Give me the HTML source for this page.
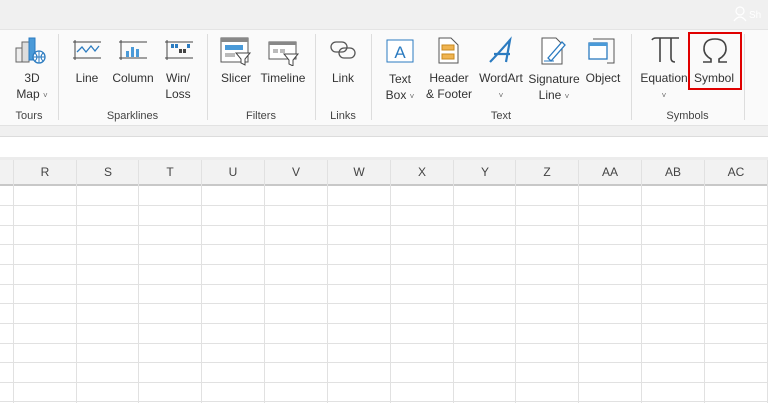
<!DOCTYPE html>
<html><head><meta charset="utf-8"><style>
body{margin:0;width:768px;height:403px;overflow:hidden;background:#fff;font-family:"Liberation Sans",sans-serif;position:relative}
.a{position:absolute}
.t{position:absolute;font-size:12px;color:#333;text-align:center;line-height:16px;white-space:nowrap}
.t i{font-style:normal;font-size:8px;color:#666}
.g{position:absolute;font-size:11px;color:#444;top:110px;text-align:center}
.sep{position:absolute;top:34px;width:1px;height:86px;background:#ddd}
.vl{position:absolute;top:160px;width:1px;height:243px;background:#e1e1e1}
.hl{position:absolute;left:0;width:768px;height:1px;background:#e1e1e1}
.ch{position:absolute;top:165px;font-size:12px;color:#444;text-align:center;width:62px}
</style></head><body>
<div class="a" style="left:0;top:0;width:768px;height:29px;background:#f0f0f0;border-bottom:1px solid #e4e4e4"></div>
<svg class="a" style="left:733px;top:6px" width="35" height="16"><circle cx="7" cy="5" r="4" fill="none" stroke="#fff" stroke-width="1.2"/><path d="M1 15 Q7 7 13 15" fill="none" stroke="#fff" stroke-width="1.2"/><text x="16" y="12" font-size="10" fill="#fff" font-family="Liberation Sans">Sh</text></svg>
<div class="a" style="left:0;top:30px;width:768px;height:95px;background:#fafafa"></div>
<div class="a" style="left:0;top:125px;width:768px;height:10px;background:#f0f0f0;border-top:1px solid #e2e2e2;border-bottom:1px solid #dcdcdc"></div>
<div class="a" style="left:0;top:157px;width:768px;height:3px;background:#ececec"></div>
<div class="a" style="left:0;top:160px;width:768px;height:24px;background:#f2f2f2;border-bottom:2px solid #c8c8c8"></div>

<div class="sep" style="left:58px"></div><div class="sep" style="left:207px"></div><div class="sep" style="left:315px"></div><div class="sep" style="left:371px"></div><div class="sep" style="left:631px"></div><div class="sep" style="left:744px"></div>

<svg class="a" style="left:14px;top:36px" width="34" height="30"><rect x="2" y="12" width="6" height="14" fill="#eee" stroke="#666"/><rect x="8" y="6" width="7" height="20" fill="#ddd" stroke="#666"/><rect x="15" y="2" width="6" height="22" fill="#4a9ad8" stroke="#2b7bc0"/><circle cx="25" cy="21" r="6" fill="#fff" stroke="#2b7bc0" stroke-width="1.3"/><path d="M19 21h12M25 15v12M21 17q4 4 0 8M29 17q-4 4 0 8" stroke="#2b7bc0" fill="none"/></svg>
<svg class="a" style="left:72px;top:38px" width="30" height="24"><path d="M3 2v20M1 4h28M1 20h28" stroke="#444" fill="none"/><path d="M5 14l5-5 4 5 5-6 4 5 4-5" stroke="#2b7bc0" fill="none" stroke-width="1.3"/></svg>
<svg class="a" style="left:118px;top:38px" width="30" height="24"><path d="M3 2v20M1 4h28M1 20h28" stroke="#444" fill="none"/><rect x="8" y="13" width="3" height="6" fill="#4a9ad8"/><rect x="13" y="9" width="3" height="10" fill="#4a9ad8"/><rect x="18" y="11" width="3" height="8" fill="#4a9ad8"/></svg>
<svg class="a" style="left:164px;top:38px" width="30" height="24"><path d="M3 2v20M1 4h28M1 20h28" stroke="#444" fill="none"/><rect x="7" y="6" width="3" height="4" fill="#2b7bc0"/><rect x="11" y="6" width="3" height="4" fill="#2b7bc0"/><rect x="15" y="11" width="3" height="4" fill="#444"/><rect x="19" y="11" width="3" height="4" fill="#444"/><rect x="23" y="6" width="3" height="4" fill="#2b7bc0"/></svg>
<svg class="a" style="left:220px;top:36px" width="32" height="30"><rect x="1" y="2" width="27" height="24" fill="#fff" stroke="#555"/><rect x="1" y="2" width="27" height="4" fill="#888"/><rect x="5" y="9" width="18" height="5" fill="#4a9ad8"/><rect x="5" y="17" width="10" height="4" fill="#bbb"/><path d="M16 17h14l-5 6v6l-4-2v-4z" fill="#fff" stroke="#444"/></svg>
<svg class="a" style="left:268px;top:40px" width="32" height="26"><rect x="1" y="2" width="27" height="17" fill="#fff" stroke="#555"/><rect x="1" y="2" width="27" height="3" fill="#888"/><rect x="5" y="9" width="5" height="4" fill="#bbb"/><rect x="12" y="9" width="5" height="4" fill="#bbb"/><path d="M16 14h14l-5 6v6l-4-2v-4z" fill="#fff" stroke="#444"/></svg>
<svg class="a" style="left:329px;top:40px" width="30" height="22"><rect x="2" y="2" width="16" height="10" rx="5" fill="none" stroke="#555" stroke-width="1.3"/><rect x="10" y="8" width="16" height="10" rx="5" fill="none" stroke="#555" stroke-width="1.3"/></svg>
<svg class="a" style="left:385px;top:38px" width="30" height="26"><rect x="2" y="2" width="26" height="22" fill="#fff" stroke="#2b7bc0"/><text x="15" y="20" font-size="17" fill="#2b7bc0" text-anchor="middle" font-family="Liberation Sans">A</text></svg>
<svg class="a" style="left:436px;top:37px" width="26" height="28"><path d="M3 1h12l7 7v18H3z" fill="#fff" stroke="#555"/><rect x="6" y="8" width="12" height="5" fill="#f0b450" stroke="#c88a20"/><rect x="6" y="17" width="12" height="5" fill="#f0b450" stroke="#c88a20"/></svg>
<svg class="a" style="left:486px;top:36px" width="30" height="30"><path d="M4 26Q10 20 24 4L20 26M8 18h16" fill="none" stroke="#2b7bc0" stroke-width="2.2"/></svg>
<svg class="a" style="left:540px;top:36px" width="30" height="30"><path d="M2 2h14l6 6v20H2z" fill="#fff" stroke="#555"/><path d="M8 22l14-16 3 3-14 16z" fill="#fff" stroke="#2b7bc0" stroke-width="1.3"/><path d="M4 25h10" stroke="#2b7bc0"/></svg>
<svg class="a" style="left:587px;top:37px" width="30" height="28"><rect x="2" y="6" width="18" height="16" fill="#fff" stroke="#2b7bc0" stroke-width="1.3"/><rect x="2" y="6" width="18" height="3" fill="#4a9ad8"/><path d="M6 2h21v24H20" fill="none" stroke="#555"/></svg>
<svg class="a" style="left:650px;top:36px" width="32" height="30"><path d="M2 4Q3 2 6 2H29M10 2V26M21 2V22Q21 26 25 26" fill="none" stroke="#444" stroke-width="1.6"/></svg>
<svg class="a" style="left:700px;top:36px" width="30" height="30"><path d="M3 26H11V23Q4 19 4 13Q4 3 15 3Q26 3 26 13Q26 19 19 23V26H27" fill="none" stroke="#444" stroke-width="1.6"/></svg>
<div class="a" style="left:688px;top:32px;width:54px;height:58px;border:2px solid #e00000;box-sizing:border-box"></div>

<div class="t" style="left:14px;top:70px;width:36px">3D<br>Map <i>˅</i></div>
<div class="t" style="left:70px;top:70px;width:34px">Line</div>
<div class="t" style="left:108px;top:70px;width:50px">Column</div>
<div class="t" style="left:160px;top:70px;width:36px">Win/<br>Loss</div>
<div class="t" style="left:218px;top:70px;width:36px">Slicer</div>
<div class="t" style="left:258px;top:70px;width:50px">Timeline</div>
<div class="t" style="left:326px;top:70px;width:34px">Link</div>
<div class="t" style="left:380px;top:71px;width:40px">Text<br>Box <i>˅</i></div>
<div class="t" style="left:422px;top:70px;width:54px">Header<br>&amp; Footer</div>
<div class="t" style="left:476px;top:70px;width:50px">WordArt<br><i>˅</i></div>
<div class="t" style="left:526px;top:71px;width:56px">Signature<br>Line <i>˅</i></div>
<div class="t" style="left:582px;top:70px;width:42px">Object</div>
<div class="t" style="left:638px;top:70px;width:52px">Equation<br><i>˅</i></div>
<div class="t" style="left:690px;top:70px;width:48px">Symbol</div>

<div class="g" style="left:0;width:58px">Tours</div>
<div class="g" style="left:58px;width:149px">Sparklines</div>
<div class="g" style="left:207px;width:108px">Filters</div>
<div class="g" style="left:315px;width:56px">Links</div>
<div class="g" style="left:371px;width:260px">Text</div>
<div class="g" style="left:631px;width:113px">Symbols</div>

<div class="hl" style="top:205px"></div><div class="hl" style="top:225px"></div><div class="hl" style="top:244px"></div><div class="hl" style="top:264px"></div><div class="hl" style="top:284px"></div><div class="hl" style="top:303px"></div><div class="hl" style="top:323px"></div><div class="hl" style="top:343px"></div><div class="hl" style="top:362px"></div><div class="hl" style="top:382px"></div><div class="hl" style="top:401px"></div>
<div class="vl" style="left:13px"></div><div class="vl" style="left:76px"></div><div class="vl" style="left:138px"></div><div class="vl" style="left:201px"></div><div class="vl" style="left:264px"></div><div class="vl" style="left:327px"></div><div class="vl" style="left:390px"></div><div class="vl" style="left:453px"></div><div class="vl" style="left:515px"></div><div class="vl" style="left:578px"></div><div class="vl" style="left:641px"></div><div class="vl" style="left:704px"></div><div class="vl" style="left:767px"></div>
<div class="ch" style="left:14px">R</div><div class="ch" style="left:77px">S</div><div class="ch" style="left:139px">T</div><div class="ch" style="left:202px">U</div><div class="ch" style="left:265px">V</div><div class="ch" style="left:328px">W</div><div class="ch" style="left:391px">X</div><div class="ch" style="left:454px">Y</div><div class="ch" style="left:516px">Z</div><div class="ch" style="left:579px">AA</div><div class="ch" style="left:642px">AB</div><div class="ch" style="left:705px">AC</div>
</body></html>
